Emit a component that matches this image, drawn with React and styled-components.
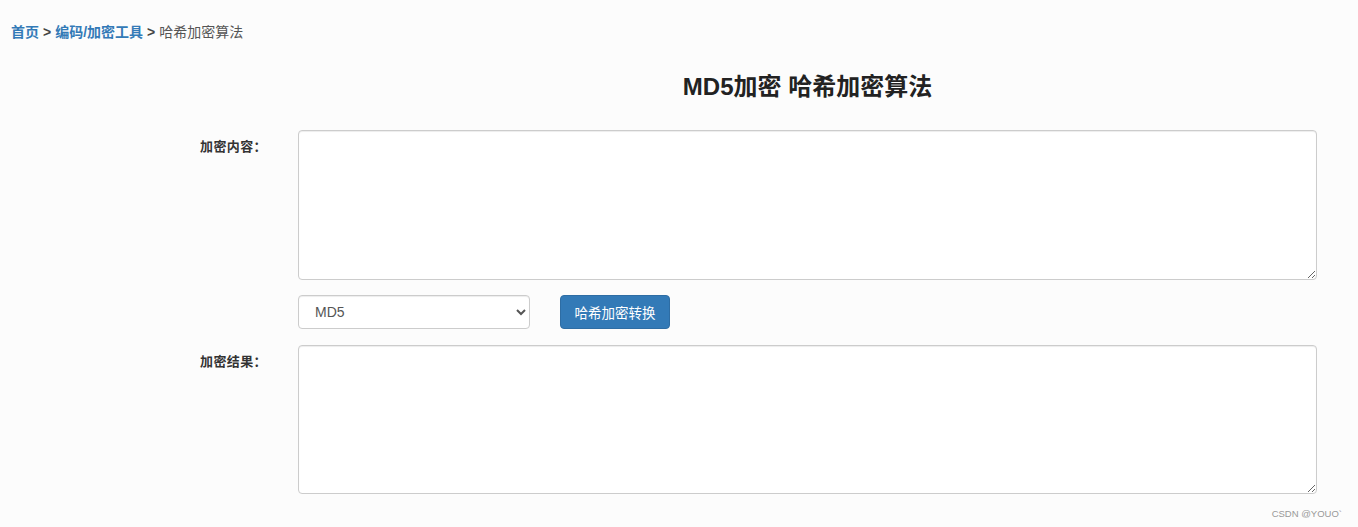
import React from "react";
import styled, { createGlobalStyle } from "styled-components";

const Global = createGlobalStyle`
  html, body { margin: 0; padding: 0; background: #fcfcfc; }
  body {
    font-family: "Liberation Sans", "Noto Sans CJK SC", Arial, sans-serif;
    color: #333;
    font-size: 14px;
  }
  * { box-sizing: border-box; }
`;

const Page = styled.div`
  position: relative;
  width: 1358px;
  height: 527px;
  padding: 22px 0 0 11px;
`;

const Crumbs = styled.nav`
  display: flex;
  align-items: center;
  gap: 4px;
  font-size: 14px;
  line-height: 20px;
  height: 20px;
`;

const CrumbLink = styled.a`
  color: #337ab7;
  font-weight: bold;
  text-decoration: none;
`;

const Sep = styled.span`
  color: #444;
  font-weight: bold;
`;

const Current = styled.span`
  color: #555;
`;

const Title = styled.h1`
  margin: 32px 0 0 287px;
  width: 1019px;
  text-align: center;
  font-size: 24px;
  line-height: 26px;
  font-weight: bold;
  color: #222;
`;

const Form = styled.div`
  margin-top: 30px;
  display: grid;
  grid-template-columns: 256px 1019px;
  column-gap: 31px;
  row-gap: 15px;
`;

const Label = styled.label`
  text-align: right;
  font-weight: bold;
  font-size: 13px;
  letter-spacing: 0.4px;
  line-height: 20px;
  padding-top: 7px;
  color: #333;
`;

const Area = styled.textarea`
  display: block;
  width: 1019px;
  height: ${(p) => p.$h}px;
  border: 1px solid #ccc;
  border-radius: 4px;
  background: #fff;
  box-shadow: inset 0 1px 1px rgba(0, 0, 0, 0.075);
  resize: vertical;
  padding: 6px 12px;
  font-family: inherit;
  font-size: 14px;
  outline: none;
`;

const Controls = styled.div`
  display: flex;
  align-items: flex-start;
  gap: 30px;
  height: 35px;
`;

const Select = styled.select`
  width: 232px;
  height: 34px;
  border: 1px solid #ccc;
  border-radius: 4px;
  background: #fff;
  color: #555;
  font-family: "Liberation Sans", Arial, sans-serif;
  font-size: 14px;
  padding: 6px 8px 6px 12px;
  box-shadow: inset 0 1px 1px rgba(0, 0, 0, 0.075);
  outline: none;
`;

const Button = styled.button`
  width: 110px;
  height: 34px;
  border: 1px solid #2e6da4;
  border-radius: 4px;
  background: #337ab7;
  color: #fff;
  font-family: "Noto Sans CJK SC", sans-serif;
  font-size: 13.5px;
  font-weight: normal;
  padding: 0;
  cursor: pointer;
`;

const Watermark = styled.div`
  position: absolute;
  right: 16px;
  bottom: 8px;
  font-size: 9.5px;
  color: #999;
  font-family: "Liberation Sans", Arial, sans-serif;
`;

export default function App() {
  return (
    <Page>
      <Global />
      <Crumbs>
        <CrumbLink href="#">首页</CrumbLink>
        <Sep>&gt;</Sep>
        <CrumbLink href="#">编码/加密工具</CrumbLink>
        <Sep>&gt;</Sep>
        <Current>哈希加密算法</Current>
      </Crumbs>
      <Title>MD5加密 哈希加密算法</Title>
      <Form>
        <Label>加密内容：</Label>
        <Area $h={150} />
        <span />
        <Controls>
          <Select defaultValue="MD5">
            <option>MD5</option>
            <option>SHA1</option>
            <option>SHA256</option>
            <option>SHA512</option>
          </Select>
          <Button>哈希加密转换</Button>
        </Controls>
        <Label>加密结果：</Label>
        <Area $h={149} />
      </Form>
      <Watermark>CSDN @YOUO`</Watermark>
    </Page>
  );
}
